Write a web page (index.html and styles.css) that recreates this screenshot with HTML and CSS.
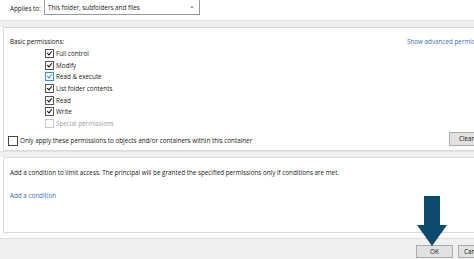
FILE: index.html
```html
<!DOCTYPE html>
<html>
<head>
<meta charset="utf-8">
<link rel="stylesheet" href="styles.css">
</head>
<body>
<div class="page">
  <div class="top">
    <span class="label">Applies to:</span>
    <div class="select"><span>This folder, subfolders and files</span><span class="caret">&#8964;</span></div>
  </div>
  <div class="band"></div>
  <div class="panel perms">
    <div class="perm-head">
      <span class="title">Basic permissions:</span>
      <span class="link">Show advanced permissions</span>
    </div>
    <div class="checks">
      <div class="row"><span class="cb on"></span>Full control</div>
      <div class="row"><span class="cb on"></span>Modify</div>
      <div class="row"><span class="cb on hover"></span>Read &amp; execute</div>
      <div class="row"><span class="cb on"></span>List folder contents</div>
      <div class="row"><span class="cb on"></span>Read</div>
      <div class="row"><span class="cb on"></span>Write</div>
      <div class="row dis"><span class="cb"></span>Special permissions</div>
    </div>
    <div class="only">
      <div class="row"><span class="cb"></span>Only apply these permissions to objects and/or containers within this container</div>
      <div class="btn clear">Clear all</div>
    </div>
  </div>
  <div class="band band2"></div>
  <div class="panel cond">
    <div class="cond-text">Add a condition to limit access. The principal will be granted the specified permissions only if conditions are met.</div>
    <div class="link">Add a condition</div>
  </div>
  <div class="footer">
    <div class="btn ok">OK</div>
    <div class="btn cancel">Cancel</div>
  </div>
  <svg class="arrow" width="32" height="50" viewBox="0 0 32 50"><path d="M8 0 H24 V29 H31 L16 50 L1 29 H8 Z" fill="#0d4a6b"/></svg>
</div>
</body>
</html>
```

FILE: styles.css
```css
html, body { margin: 0; padding: 0; }
body {
  width: 474px; height: 259px; overflow: hidden;
  font-family: "Open Sans", "Noto Sans", sans-serif;
  font-size: 6.3px; color: #1a1a1a; background: #fff;
}
.page { position: relative; width: 474px; height: 259px; display: flex; flex-direction: column; overflow: hidden; }
.top { height: 20px; display: flex; align-items: flex-start; padding-left: 10px; background: #fff; }
.top .label { margin-top: 4px; width: 34px; }
.select {
  margin-top: -1px; width: 156px; height: 16px; box-sizing: border-box;
  border: 1px solid #9a9a9a; background: #fff; display: flex; align-items: center;
  justify-content: space-between; padding: 0 4px 0 3px;
}
.caret { font-size: 7px; line-height: 7px; margin-top: -4px; color: #444; }
.band { height: 6px; background: #f0f0f0; border-top: 1px solid #e3e3e3; }
.band2 { height: 5px; }
.panel { margin-left: 3px; background: #fff; border: 1px solid #dadada; border-right: none; }
.perms { height: 124px; box-sizing: border-box; padding: 9px 0 0 6px; display: flex; flex-direction: column; }
.perm-head { display: flex; align-items: center; height: 9px; white-space: nowrap; }
.perm-head .title { width: 397px; flex: none; }
.link { color: #3b6fc0; }
.checks { margin-left: 35px; margin-top: 2px; display: flex; flex-direction: column; }
.row { display: flex; align-items: center; height: 11.6px; white-space: nowrap; }
.cb {
  width: 7px; height: 7px; border: 1px solid #555; background: #fff; margin-right: 2px;
  position: relative; flex: none;
}
.cb.on::after {
  content: ""; position: absolute; left: 2px; top: 0px; width: 2px; height: 4px;
  border: solid #111; border-width: 0 1.5px 1.5px 0; transform: rotate(40deg);
}
.cb.hover { border-color: #3a8ee0; }
.cb.hover::after { border-color: #3a8ee0; }
.dis { color: #a0a0a0; }
.dis .cb { border-color: #c8c8c8; }
.only { display: flex; justify-content: space-between; align-items: center; margin-top: 6px; }
.only .row { margin-left: -2px; }
.only .cb { width: 8px; height: 8px; border-color: #444; margin-right: 2px; }
.btn {
  box-sizing: border-box; background: #e1e1e1; border: 1px solid #adadad;
  display: flex; align-items: center; justify-content: center; height: 14px; white-space: nowrap;
}
.clear { width: 40px; justify-content: flex-start; padding-left: 9px; margin-right: -15px; margin-top: -4px; }
.cond { height: 76px; box-sizing: border-box; padding: 10px 0 0 6px; }
.cond-text { height: 9px; }
.cond .link { margin-top: 14px; }
.footer {
  margin-top: 5px; flex: 1; background: #f0f0f0; border-top: 1px solid #dcdcdc;
  display: flex; justify-content: flex-end; align-items: flex-end; padding-bottom: 1px; gap: 5px;
}
.ok { width: 37px; height: 13px; }
.cancel { width: 37px; justify-content: flex-start; padding-left: 5px; height: 13px; margin-right: -21px; }
.arrow { position: absolute; left: 416px; top: 196px; }
```
